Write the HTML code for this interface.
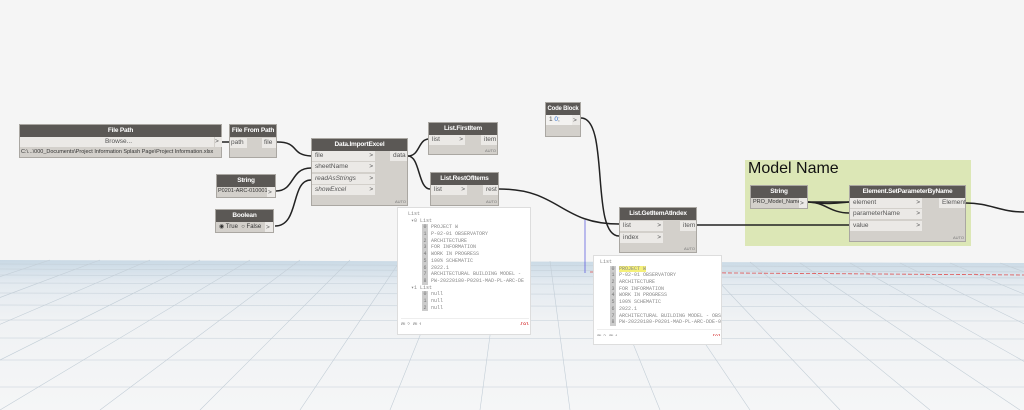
<!DOCTYPE html>
<html><head><meta charset="utf-8"><style>
*{margin:0;padding:0;box-sizing:border-box}
body{width:1024px;height:410px;overflow:hidden;background:#f5f5f5;position:relative;font-family:"Liberation Sans",sans-serif}
.n{position:absolute;background:#d3d0cb;border:1px solid #aaa7a2;font-size:7px;color:#444}
.h{background:#5b5855;color:#fff;font-weight:bold;text-align:center;font-size:6.5px;height:12px;line-height:12px;white-space:nowrap;overflow:hidden;letter-spacing:-0.2px}
.r{position:absolute;background:#ebe9e6;height:10px;line-height:10px;padding-left:3px;font-size:6.5px;color:#555;white-space:nowrap}
.a{position:absolute;right:1px;bottom:1px;font-size:4px;color:#777}
.pv{position:absolute;background:#fff;border:1px solid #ddd;font-family:"Liberation Mono",monospace;font-size:5px;color:#888}
.pv div{height:6.7px;line-height:6.7px;white-space:nowrap;overflow:hidden}
.ix{display:inline-block;background:#ccc;color:#777;width:6px;text-align:center;margin-right:3px}
</style></head><body>
<svg style="position:absolute;left:0;top:0" width="1024" height="410">
<defs><linearGradient id="g" x1="0" y1="0" x2="0" y2="1"><stop offset="0" stop-color="#c9d9e5"/><stop offset="0.15" stop-color="#e3eaf0"/><stop offset="0.4" stop-color="#f0f2f4"/><stop offset="1" stop-color="#f5f6f7"/></linearGradient></defs>
<polygon points="0,260 1024,263 1024,410 0,410" fill="url(#g)"/>
<g stroke="#c3ced7" stroke-width="0.6" fill="none">
<path d="M0,264 L1024,267 M0,269 L1024,272 M0,275 L1024,278 M0,283 L1024,285 M0,293 L1024,295 M0,305 L1024,307 M0,320 L1024,321 M0,338 L1024,339 M0,360 L1024,360 M0,387 L1024,387"/>
<path d="M100,260 L-300,410 M200,260 L-100,410 M300,260 L100,410 M400,261 L300,410 M500,261 L480,410 M600,262 L660,410 M700,262 L840,410 M800,263 L1020,410 M900,263 L1200,410 M1000,263 L1400,410 M50,260 L-400,410 M150,260 L-200,410 M250,260 L0,410 M350,260 L200,410 M450,261 L390,410 M550,261 L570,410 M650,262 L750,410 M750,262 L930,410 M850,263 L1110,410 M950,263 L1300,410"/>
</g>
<line x1="590" y1="272" x2="1024" y2="275" stroke="#e05050" stroke-width="0.8" stroke-dasharray="4,2"/>
<line x1="585" y1="220" x2="585" y2="273" stroke="#6060e0" stroke-width="0.8"/>
<rect x="745" y="160" width="226" height="86" fill="#dce7b6"/>
<g stroke="#222" stroke-width="1.5" fill="none">
<path d="M222,142 C226,142 226,142 229,142"/>
<path d="M277,142 C300,142 290,155 311,156"/>
<path d="M276,191 C295,191 290,168 311,168"/>
<path d="M275,226 C300,226 290,180 311,180"/>
<path d="M408,156 C420,156 418,139 429,139"/>
<path d="M408,156 C420,156 418,189 430,189"/>
<path d="M499,189 C560,189 560,224 619,224"/>
<path d="M581,118 C610,118 590,236 619,236"/>
<path d="M697,225 L849,225"/>
<path d="M808,202 C825,202 830,202 849,202"/>
<path d="M808,202 C825,202 830,213 849,213"/>
<path d="M808,202 C825,204 830,204 849,202"/>
<path d="M966,203 C990,203 1000,212 1024,212"/>
</g>
</svg>
<div style="position:absolute;left:748px;top:160px;font-size:16px;color:#111">Model Name</div>

<div class="n" style="left:19px;top:124px;width:203px;height:34px"><div class="h">File Path</div>
<div class="r" style="left:0;top:12px;width:194px;text-align:center">Browse...</div><div class="r" style="left:195px;top:12px;width:7px;padding:0">&gt;</div>
<div style="position:absolute;left:1px;top:24px;font-size:5.5px;color:#333;white-space:nowrap">C:\...\000_Documents\Project Information Splash Page\Project Information.xlsx</div></div>

<div class="n" style="left:229px;top:124px;width:48px;height:34px"><div class="h">File From Path</div>
<div class="r" style="left:0;top:13px;width:17px;padding-left:1px">path</div><div class="r" style="right:0;top:13px;width:14px;padding-left:2px">file</div></div>

<div class="n" style="left:311px;top:138px;width:97px;height:68px"><div class="h">Data.ImportExcel</div>
<div class="r" style="left:0;top:12px;width:63px">file<span style="float:right;padding-right:2px">&gt;</span></div>
<div class="r" style="left:0;top:23px;width:63px">sheetName<span style="float:right;padding-right:2px">&gt;</span></div>
<div class="r" style="left:0;top:35px;width:63px;font-style:italic">readAsStrings<span style="float:right;padding-right:2px">&gt;</span></div>
<div class="r" style="left:0;top:46px;width:63px;font-style:italic">showExcel<span style="float:right;padding-right:2px">&gt;</span></div>
<div class="r" style="right:0;top:12px;width:17px">data</div><div class="a">AUTO</div></div>

<div class="n" style="left:216px;top:174px;width:60px;height:24px"><div class="h">String</div>
<div style="position:absolute;left:1px;top:13px;font-size:5.5px;color:#333;white-space:nowrap">P0201-ARC-010001</div><div class="r" style="right:0;top:12px;width:8px;padding:1px">&gt;</div></div>

<div class="n" style="left:215px;top:209px;width:59px;height:24px"><div class="h">Boolean</div>
<div style="position:absolute;left:3px;top:13px;font-size:6px;color:#333;white-space:nowrap">◉ True &nbsp;○ False</div><div class="r" style="right:0;top:12px;width:8px;padding:1px">&gt;</div></div>

<div class="n" style="left:428px;top:122px;width:70px;height:33px"><div class="h">List.FirstItem</div>
<div class="r" style="left:0;top:12px;width:36px">list<span style="float:right;padding-right:2px">&gt;</span></div><div class="r" style="right:0;top:12px;width:16px">item</div><div class="a">AUTO</div></div>

<div class="n" style="left:430px;top:172px;width:69px;height:34px"><div class="h">List.RestOfItems</div>
<div class="r" style="left:0;top:12px;width:36px">list<span style="float:right;padding-right:2px">&gt;</span></div><div class="r" style="right:0;top:12px;width:15px">rest</div><div class="a">AUTO</div></div>

<div class="n" style="left:545px;top:102px;width:36px;height:35px"><div class="h" style="font-size:6px">Code Block</div>
<div class="r" style="left:0;top:12px;width:27px;background:#f3f2f0">1 <span style="color:#2a6cd0">0</span>;</div><div class="r" style="right:0;top:12px;width:8px;padding:1px">&gt;</div></div>

<div class="n" style="left:619px;top:207px;width:78px;height:46px"><div class="h">List.GetItemAtIndex</div>
<div class="r" style="left:0;top:13px;width:43px">list<span style="float:right;padding-right:2px">&gt;</span></div>
<div class="r" style="left:0;top:25px;width:43px">index<span style="float:right;padding-right:2px">&gt;</span></div>
<div class="r" style="right:0;top:13px;width:16px">item</div><div class="a">AUTO</div></div>

<div class="n" style="left:750px;top:185px;width:58px;height:24px"><div class="h">String</div>
<div style="position:absolute;left:2px;top:13px;font-size:5.5px;color:#333;white-space:nowrap">PRO_Model_Name</div><div class="r" style="right:0;top:12px;width:8px;padding:1px">&gt;</div></div>

<div class="n" style="left:849px;top:185px;width:117px;height:57px"><div class="h">Element.SetParameterByName</div>
<div class="r" style="left:0;top:12px;width:72px">element<span style="float:right;padding-right:2px">&gt;</span></div>
<div class="r" style="left:0;top:23px;width:72px">parameterName<span style="float:right;padding-right:2px">&gt;</span></div>
<div class="r" style="left:0;top:35px;width:72px">value<span style="float:right;padding-right:2px">&gt;</span></div>
<div class="r" style="right:0;top:12px;width:26px">Element</div><div class="a">AUTO</div></div>

<div class="pv" style="left:397px;top:207px;width:134px;height:128px;padding:3px 0 0 10px">
<div>List</div><div>&nbsp;▾0 List</div>
<div style="padding-left:14px"><span class="ix">0</span>PROJECT W</div>
<div style="padding-left:14px"><span class="ix">1</span>P-02-01 OBSERVATORY</div>
<div style="padding-left:14px"><span class="ix">2</span>ARCHITECTURE</div>
<div style="padding-left:14px"><span class="ix">3</span>FOR INFORMATION</div>
<div style="padding-left:14px"><span class="ix">4</span>WORK IN PROGRESS</div>
<div style="padding-left:14px"><span class="ix">5</span>100% SCHEMATIC</div>
<div style="padding-left:14px"><span class="ix">6</span>2022.1</div>
<div style="padding-left:14px"><span class="ix">7</span>ARCHITECTURAL BUILDING MODEL -</div>
<div style="padding-left:14px"><span class="ix">8</span>PW-20220180-P0201-MAD-PL-ARC-DE</div>
<div>&nbsp;▾1 List</div>
<div style="padding-left:14px"><span class="ix">0</span>null</div>
<div style="padding-left:14px"><span class="ix">1</span>null</div>
<div style="padding-left:14px"><span class="ix">2</span>null</div>
<div style="position:absolute;left:3px;top:110px;border-top:1px solid #eee;width:128px;padding-top:3px">@L2 @L1 <span style="float:right;color:#c00">{9}</span></div>
</div>

<div class="pv" style="left:593px;top:255px;width:129px;height:90px;padding:3px 0 0 6px">
<div>List</div>
<div style="padding-left:10px"><span class="ix">0</span><span style="background:#f5f07a">PROJECT W</span></div>
<div style="padding-left:10px"><span class="ix">1</span>P-02-01 OBSERVATORY</div>
<div style="padding-left:10px"><span class="ix">2</span>ARCHITECTURE</div>
<div style="padding-left:10px"><span class="ix">3</span>FOR INFORMATION</div>
<div style="padding-left:10px"><span class="ix">4</span>WORK IN PROGRESS</div>
<div style="padding-left:10px"><span class="ix">5</span>100% SCHEMATIC</div>
<div style="padding-left:10px"><span class="ix">6</span>2022.1</div>
<div style="padding-left:10px"><span class="ix">7</span>ARCHITECTURAL BUILDING MODEL - OBSEF</div>
<div style="padding-left:10px"><span class="ix">8</span>PW-20220180-P0201-MAD-PL-ARC-DDE-000</div>
<div style="position:absolute;left:3px;top:73px;border-top:1px solid #eee;width:124px;padding-top:4px">@L2 @L1 <span style="float:right;color:#c00">{9}</span></div>
</div>
</body></html>
